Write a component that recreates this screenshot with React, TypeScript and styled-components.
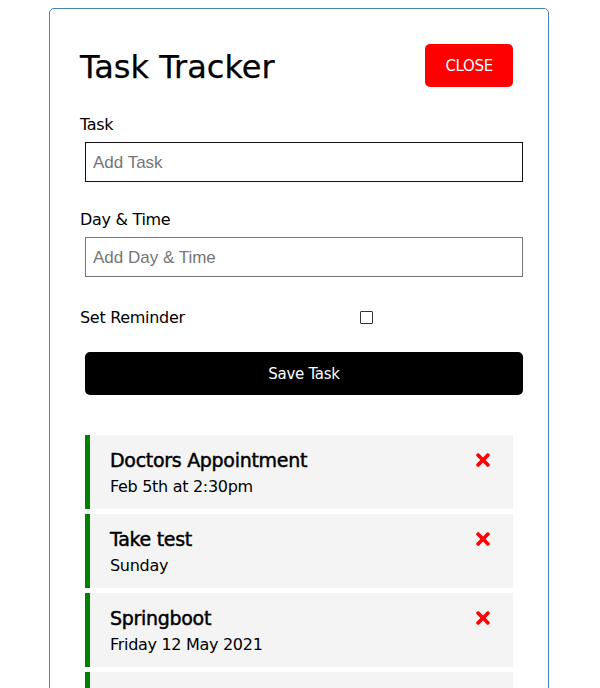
import React, { useState } from 'react';
import styled, { createGlobalStyle } from 'styled-components';
import { FaTimes } from 'react-icons/fa';

const GlobalStyle = createGlobalStyle`
  * {
    box-sizing: border-box;
    margin: 0;
    padding: 0;
  }
  body {
    font-family: 'DejaVu Sans', 'Noto Sans', sans-serif;
    letter-spacing: -0.3px;
    color: #000;
    background: #fff;
  }
`;

const Container = styled.div`
  max-width: 500px;
  margin: 8px 0 30px 49px;
  overflow: auto;
  min-height: 300px;
  border: 1px solid steelblue;
  padding: 30px;
  border-radius: 5px;
`;

const Header = styled.header`
  display: flex;
  justify-content: space-between;
  align-items: center;
  margin-bottom: 20px;
`;

const Title = styled.h1`
  font-size: 32px;
  font-weight: 400;
  line-height: 40px;
  padding-top: 3px;
  letter-spacing: 0;
  -webkit-text-stroke: 0.25px currentColor;
`;

const Button = styled.button<{ $bg?: string; $block?: boolean }>`
  display: ${(p) => (p.$block ? 'block' : 'inline-block')};
  width: ${(p) => (p.$block ? '100%' : 'auto')};
  background: ${(p) => p.$bg || '#000'};
  color: #fff;
  border: none;
  padding: 11px 20px 9px;
  margin: 5px;
  border-radius: 5px;
  cursor: pointer;
  font-size: 15px;
  line-height: 23px;
  font-family: inherit;
  letter-spacing: inherit;
`;

const Form = styled.form`
  margin-bottom: 40px;
`;

const FormControl = styled.div`
  margin: 20px 0;
`;

const Label = styled.label`
  display: block;
  font-size: 16px;
  line-height: 25px;
`;

const TextInput = styled.input<{ $active?: boolean }>`
  width: 100%;
  height: 40px;
  margin: 5px;
  padding: 4px 7px 2px;
  font-size: 17px;
  font-family: 'Liberation Sans', Arial, sans-serif;
  letter-spacing: 0;
  border: 1px solid ${(p) => (p.$active ? '#111' : '#767676')};
  border-radius: 0;
  outline: none;
  &::placeholder {
    color: #757575;
  }
`;

const CheckRow = styled(FormControl)`
  display: flex;
  align-items: center;
  justify-content: space-between;
`;

const ReminderLabel = styled(Label)`
  flex: 1;
`;

const CheckCell = styled.div`
  flex: 2;
  height: 20px;
  margin: 5px;
  padding-right: 6px;
  display: flex;
  align-items: center;
  justify-content: center;
`;

const Checkbox = styled.input`
  appearance: none;
  width: 13px;
  height: 13px;
  margin: 0;
  border: 1px solid #333;
  border-radius: 1px;
  background: #fff;
  cursor: pointer;
  &:checked {
    background: #0075ff;
    border-color: #0075ff;
  }
`;

const TaskCard = styled.div<{ $reminder: boolean }>`
  background: #f4f4f4;
  margin: 5px;
  padding: 10px 20px;
  cursor: pointer;
  border-left: ${(p) => (p.$reminder ? '5px solid green' : 'none')};
`;

const TaskTitle = styled.h3`
  display: flex;
  align-items: center;
  justify-content: space-between;
  font-size: 19px;
  font-weight: 400;
  line-height: 30px;
  -webkit-text-stroke: 0.45px currentColor;
`;

const TaskDay = styled.p`
  font-size: 16px;
  line-height: 24px;
`;

const DeleteIcon = styled(FaTimes)`
  color: red;
  font-size: 20px;
  cursor: pointer;
  flex-shrink: 0;
`;

type Task = { id: number; text: string; day: string; reminder: boolean };

const initialTasks: Task[] = [
  { id: 1, text: 'Doctors Appointment', day: 'Feb 5th at 2:30pm', reminder: true },
  { id: 2, text: 'Take test', day: 'Sunday', reminder: true },
  { id: 3, text: 'Springboot', day: 'Friday 12 May 2021', reminder: true },
  { id: 4, text: 'Meeting at School', day: 'Feb 6th at 1:30pm', reminder: true },
];

export default function App() {
  const [tasks, setTasks] = useState<Task[]>(initialTasks);
  const [text, setText] = useState('');
  const [day, setDay] = useState('');
  const [reminder, setReminder] = useState(false);

  const onSubmit = (e: React.FormEvent) => {
    e.preventDefault();
    if (!text) return;
    setTasks([...tasks, { id: Date.now(), text, day, reminder }]);
    setText('');
    setDay('');
    setReminder(false);
  };

  return (
    <>
      <GlobalStyle />
      <Container>
        <Header>
          <Title>Task Tracker</Title>
          <Button $bg="red">CLOSE</Button>
        </Header>
        <Form onSubmit={onSubmit}>
          <FormControl>
            <Label>Task</Label>
            <TextInput
              $active
              type="text"
              placeholder="Add Task"
              value={text}
              onChange={(e) => setText(e.target.value)}
            />
          </FormControl>
          <FormControl>
            <Label>Day &amp; Time</Label>
            <TextInput
              type="text"
              placeholder="Add Day & Time"
              value={day}
              onChange={(e) => setDay(e.target.value)}
            />
          </FormControl>
          <CheckRow>
            <ReminderLabel>Set Reminder</ReminderLabel>
            <CheckCell>
              <Checkbox
                type="checkbox"
                checked={reminder}
                onChange={(e) => setReminder(e.currentTarget.checked)}
              />
            </CheckCell>
          </CheckRow>
          <Button $block type="submit">
            Save Task
          </Button>
        </Form>
        {tasks.map((task) => (
          <TaskCard key={task.id} $reminder={task.reminder}>
            <TaskTitle>
              {task.text}
              <DeleteIcon onClick={() => setTasks(tasks.filter((t) => t.id !== task.id))} />
            </TaskTitle>
            <TaskDay>{task.day}</TaskDay>
          </TaskCard>
        ))}
      </Container>
    </>
  );
}
